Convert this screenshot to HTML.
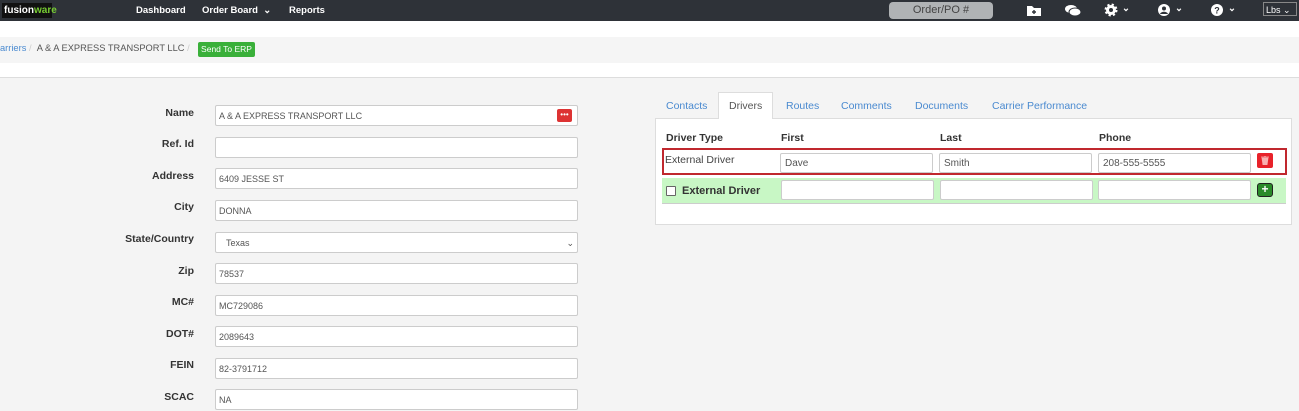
<html><head><style>
body{margin:0;width:1299px;height:411px;overflow:hidden;background:#f4f4f4;font-family:"Liberation Sans",sans-serif;position:relative}
.a{position:absolute}
.nav{left:0;top:0;width:1299px;height:21px;background:#2e3238}
.nt{color:#fff;font-weight:bold;font-size:9.5px;top:5px}
.lbl{font-weight:bold;font-size:10.5px;color:#333;text-align:right;width:120px;left:74px}
.in{left:215px;width:363px;height:21px;background:#fff;border:1px solid #ccc;border-radius:2px;font-size:9px;color:#555;box-sizing:border-box;padding:5px 3px}
.ti{height:20px;background:#fff;border:1px solid #ccc;border-radius:2px;box-sizing:border-box;font-size:10px;color:#555;padding:4px 4px;width:153px}
.tab{font-size:10.5px;color:#4a8ad0;top:100px}
.th{font-weight:bold;font-size:10.5px;color:#333;top:132px}
</style></head><body>
<div class="a nav"></div>
<div class="a" style="left:2px;top:3px;width:48px;height:15px;background:#111;font-size:10px;font-weight:bold;color:#fff;line-height:15px;padding-left:2px">fusion<span style="color:#7c3">ware</span></div>
<div class="a nt" style="left:136px">Dashboard</div>
<div class="a nt" style="left:202px">Order Board &nbsp;⌄</div>
<div class="a nt" style="left:289px">Reports</div>
<div class="a" style="left:889px;top:2px;width:104px;height:17px;background:#b0b3b5;border-radius:4px;color:#444;font-size:11px;text-align:center;line-height:17px">Order/PO #</div>
<svg class="a" style="left:1026px;top:4px" width="16" height="13" viewBox="0 0 16 13"><path d="M1 2h5l2 2h7v8H1z" fill="#fff"/><path d="M8 6v4M6 8h4" stroke="#2e3238" stroke-width="1.4"/></svg>
<svg class="a" style="left:1064px;top:4px" width="18" height="13" viewBox="0 0 18 13"><ellipse cx="7" cy="5" rx="6" ry="4" fill="#fff"/><ellipse cx="11" cy="8" rx="6" ry="4" fill="#fff" stroke="#2e3238"/></svg>
<svg class="a" style="left:1104px;top:3px" width="14" height="14" viewBox="0 0 14 14"><circle cx="7" cy="7" r="5" fill="#fff" stroke="#fff" stroke-width="3" stroke-dasharray="2 2"/><circle cx="7" cy="7" r="2" fill="#2e3238"/></svg><div class="a nt" style="left:1122px;top:3px">⌄</div>
<svg class="a" style="left:1157px;top:3px" width="14" height="14" viewBox="0 0 14 14"><circle cx="7" cy="7" r="6" fill="#fff"/><circle cx="7" cy="5.5" r="2" fill="#2e3238"/><path d="M3 11c1-3 7-3 8 0" fill="#2e3238"/></svg><div class="a nt" style="left:1175px;top:3px">⌄</div>
<svg class="a" style="left:1210px;top:3px" width="14" height="14" viewBox="0 0 14 14"><circle cx="7" cy="7" r="6" fill="#fff"/><text x="7" y="10.5" font-size="9" font-weight="bold" text-anchor="middle" fill="#2e3238" font-family="Liberation Sans">?</text></svg><div class="a nt" style="left:1228px;top:3px">⌄</div>
<div class="a" style="left:1263px;top:2px;width:34px;height:14px;border:1px solid #888;color:#fff;font-size:9px;line-height:14px;padding-left:2px;box-sizing:border-box">Lbs ⌄</div>
<div class="a" style="left:0;top:21px;width:1299px;height:56px;background:#fff;border-bottom:1px solid #ddd"></div>
<div class="a" style="left:0;top:37px;width:1299px;height:26px;background:#f5f5f5"></div>
<div class="a" style="left:0;top:43px;font-size:9.3px;color:#555;white-space:nowrap"><span style="color:#4a8ad0">arriers</span> <span style="color:#ccc">/</span> &nbsp;A &amp; A EXPRESS TRANSPORT LLC <span style="color:#ccc">/</span></div>
<div class="a" style="left:198px;top:42px;width:57px;height:15px;background:#3ab03a;border-radius:2px;color:#fff;font-size:8.5px;line-height:15px;text-align:center">Send To ERP</div>

<div class="a lbl" style="top:107px">Name</div><div class="a in" style="top:105px">A &amp; A EXPRESS TRANSPORT LLC</div>
<div class="a" style="left:557px;top:109px;width:15px;height:13px;background:#d33;border-radius:2px;color:#fff;font-size:8px;text-align:center;line-height:11px">•••</div>
<div class="a lbl" style="top:138px">Ref. Id</div><div class="a in" style="top:137px"></div>
<div class="a lbl" style="top:170px">Address</div><div class="a in" style="top:168px">6409 JESSE ST</div>
<div class="a lbl" style="top:201px">City</div><div class="a in" style="top:200px">DONNA</div>
<div class="a lbl" style="top:233px">State/Country</div><div class="a in" style="top:232px;padding-left:10px">Texas<span style="float:right">⌄</span></div>
<div class="a lbl" style="top:265px">Zip</div><div class="a in" style="top:263px">78537</div>
<div class="a lbl" style="top:296px">MC#</div><div class="a in" style="top:295px">MC729086</div>
<div class="a lbl" style="top:328px">DOT#</div><div class="a in" style="top:326px">2089643</div>
<div class="a lbl" style="top:359px">FEIN</div><div class="a in" style="top:358px">82-3791712</div>
<div class="a lbl" style="top:391px">SCAC</div><div class="a in" style="top:389px">NA</div>

<div class="a" style="left:655px;top:118px;width:637px;height:107px;background:#fff;border:1px solid #ddd;box-sizing:border-box"></div>
<div class="a" style="left:718px;top:92px;width:55px;height:27px;background:#fff;border:1px solid #ddd;border-bottom:none;box-sizing:border-box"></div>
<div class="a tab" style="left:666px">Contacts</div>
<div class="a tab" style="left:729px;color:#555">Drivers</div>
<div class="a tab" style="left:786px">Routes</div>
<div class="a tab" style="left:841px">Comments</div>
<div class="a tab" style="left:915px">Documents</div>
<div class="a tab" style="left:992px">Carrier Performance</div>
<div class="a th" style="left:666px">Driver Type</div>
<div class="a th" style="left:781px">First</div>
<div class="a th" style="left:940px">Last</div>
<div class="a th" style="left:1099px">Phone</div>
<div class="a" style="left:662px;top:148px;width:625px;height:27px;border:2px solid #c0282e;box-sizing:border-box"></div>
<div class="a" style="left:665px;top:154px;font-size:10.5px;color:#444">External Driver</div>
<div class="a ti" style="left:780px;top:153px">Dave</div>
<div class="a ti" style="left:939px;top:153px">Smith</div>
<div class="a ti" style="left:1098px;top:153px">208-555-5555</div>
<div class="a" style="left:1257px;top:153px;width:16px;height:15px;background:#e8222a;border-radius:2px"></div>
<svg class="a" style="left:1261px;top:156px" width="8" height="9" viewBox="0 0 8 9"><path d="M0 1h8M3 0h2M1 2h6l-1 7H2z" fill="#f8b0b0" stroke="#f8b0b0" stroke-width=".8"/></svg>
<div class="a" style="left:662px;top:178px;width:624px;height:25px;background:#c8f7c5;border-bottom:1px solid #ccc"></div>
<div class="a" style="left:666px;top:186px;width:8px;height:8px;border:1px solid #666;background:#fff;border-radius:1px"></div>
<div class="a" style="left:682px;top:185px;font-size:11px;font-weight:bold;color:#333">External Driver</div>
<div class="a ti" style="left:781px;top:180px"></div>
<div class="a ti" style="left:940px;top:180px"></div>
<div class="a ti" style="left:1098px;top:180px"></div>
<div class="a" style="left:1257px;top:183px;width:16px;height:14px;background:#2a8a2a;border:1px solid #222;border-radius:3px;box-sizing:border-box;color:#fff;font-size:12px;font-weight:bold;line-height:11px;text-align:center">+</div>
</body></html>
